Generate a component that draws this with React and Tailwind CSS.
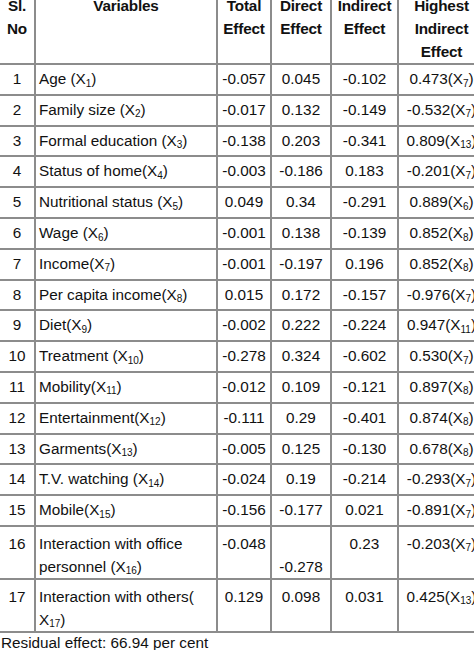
const rows = [
  ["1", "Age (X", "1", ")", "-0.057", "0.045", "-0.102", "0.473(X", "7", ")"],
  ["2", "Family size (X", "2", ")", "-0.017", "0.132", "-0.149", "-0.532(X", "7", ")"],
  ["3", "Formal education (X", "3", ")", "-0.138", "0.203", "-0.341", "0.809(X", "13", ")"],
  ["4", "Status of home(X", "4", ")", "-0.003", "-0.186", "0.183", "-0.201(X", "7", ")"],
  ["5", "Nutritional status (X", "5", ")", "0.049", "0.34", "-0.291", "0.889(X", "6", ")"],
  ["6", "Wage (X", "6", ")", "-0.001", "0.138", "-0.139", "0.852(X", "8", ")"],
  ["7", "Income(X", "7", ")", "-0.001", "-0.197", "0.196", "0.852(X", "8", ")"],
  ["8", "Per capita income(X", "8", ")", "0.015", "0.172", "-0.157", "-0.976(X", "7", ")"],
  ["9", "Diet(X", "9", ")", "-0.002", "0.222", "-0.224", "0.947(X", "11", ")"],
  ["10", "Treatment (X", "10", ")", "-0.278", "0.324", "-0.602", "0.530(X", "7", ")"],
  ["11", "Mobility(X", "11", ")", "-0.012", "0.109", "-0.121", "0.897(X", "8", ")"],
  ["12", "Entertainment(X", "12", ")", "-0.111", "0.29", "-0.401", "0.874(X", "8", ")"],
  ["13", "Garments(X", "13", ")", "-0.005", "0.125", "-0.130", "0.678(X", "8", ")"],
  ["14", "T.V. watching (X", "14", ")", "-0.024", "0.19", "-0.214", "-0.293(X", "7", ")"],
  ["15", "Mobile(X", "15", ")", "-0.156", "-0.177", "0.021", "-0.891(X", "7", ")"],
];

const Sub = ({ children }) => (
  <sub className="text-[10px] leading-none align-baseline">{children}</sub>
);

const cell = "border-r-2 border-b-2 border-[#8c8c8c]";
const cols = "grid grid-cols-[36px_182px_54px_60px_67px_87px]";

export default function App() {
  return (
    <div
      className="w-[474px] h-[650px] overflow-hidden bg-white text-[#111] text-[15.3px] leading-[22.75px]"
      style={{ fontFamily: '"Liberation Sans", Arial, sans-serif' }}
    >
      <div className="w-[486px] -mt-[9px]">
        {/* header */}
        <div className={`${cols} h-[74px] font-bold text-center tracking-[-0.2px]`}>
          <div className={`${cell} pt-[4px]`}>Sl.<br />No</div>
          <div className={`${cell} pt-[4px]`}>Variables</div>
          <div className={`${cell} pt-[4px]`}>Total<br />Effect</div>
          <div className={`${cell} pt-[4px]`}>Direct<br />Effect</div>
          <div className={`${cell} pt-[4px]`}>Indirect<br />Effect</div>
          <div className={`${cell} pt-[4px]`}>Highest<br />Indirect<br />Effect</div>
        </div>

        {rows.map((r) => (
          <div key={r[0]} className={`${cols} h-[30.8px] text-center`}>
            <div className={`${cell} flex items-center justify-center`}>{r[0]}</div>
            <div className={`${cell} flex items-center pl-[3px] text-left whitespace-nowrap`}>
              <span>{r[1]}<Sub>{r[2]}</Sub>{r[3]}</span>
            </div>
            <div className={`${cell} flex items-center justify-center`}>{r[4]}</div>
            <div className={`${cell} flex items-center justify-center`}>{r[5]}</div>
            <div className={`${cell} flex items-center justify-center`}>{r[6]}</div>
            <div className={`${cell} flex items-center justify-center whitespace-nowrap`}>
              <span>{r[7]}<Sub>{r[8]}</Sub>{r[9]}</span>
            </div>
          </div>
        ))}

        <div className={`${cols} h-[53px] text-center`}>
          <div className={`${cell} pt-[6px]`}>16</div>
          <div className={`${cell} pt-[6px] pl-[3px] text-left`}>
            Interaction with office<br />personnel (X<Sub>16</Sub>)
          </div>
          <div className={`${cell} pt-[6px]`}>-0.048</div>
          <div className={`${cell} pt-[6px]`}>&nbsp;<br />-0.278</div>
          <div className={`${cell} pt-[6px]`}>0.23</div>
          <div className={`${cell} pt-[6px] whitespace-nowrap`}>-0.203(X<Sub>7</Sub>)</div>
        </div>

        <div className={`${cols} h-[52px] text-center`}>
          <div className={`${cell} pt-[6px]`}>17</div>
          <div className={`${cell} pt-[6px] pl-[3px] text-left`}>
            Interaction with others(<br />X<Sub>17</Sub>)
          </div>
          <div className={`${cell} pt-[6px]`}>0.129</div>
          <div className={`${cell} pt-[6px]`}>0.098</div>
          <div className={`${cell} pt-[6px]`}>0.031</div>
          <div className={`${cell} pt-[6px] whitespace-nowrap`}>0.425(X<Sub>13</Sub>)</div>
        </div>

        <p className="pl-[1px]">Residual effect: 66.94 per cent</p>
      </div>
    </div>
  );
}
